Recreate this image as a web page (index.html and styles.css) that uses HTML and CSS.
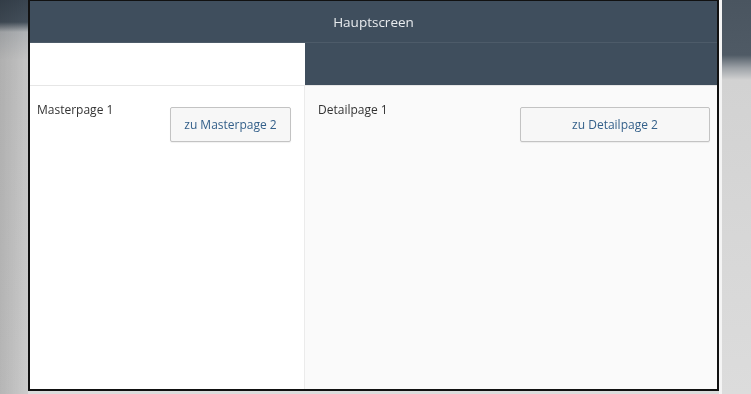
FILE: index.html
```html
<!DOCTYPE html>
<html lang="de">
<head>
<meta charset="utf-8">
<title>Hauptscreen</title>
<link rel="stylesheet" href="styles.css">
</head>
<body>
<div class="stage">
  <div class="side side-left"></div>
  <div class="frame">
    <div class="shellbar">Hauptscreen</div>
    <div class="subbars">
      <div class="subbar-master"></div>
      <div class="subbar-detail"></div>
    </div>
    <div class="panes">
      <div class="pane pane-master">
        <span class="label">Masterpage 1</span>
        <button class="btn btn-master">zu Masterpage 2</button>
      </div>
      <div class="pane pane-detail">
        <span class="label">Detailpage 1</span>
        <button class="btn btn-detail">zu Detailpage 2</button>
      </div>
    </div>
  </div>
  <div class="side side-right"></div>
</div>
</body>
</html>
```
FILE: styles.css
```css
* { box-sizing: border-box; }
html, body { margin: 0; padding: 0; }
body {
  width: 751px;
  height: 394px;
  overflow: hidden;
  background: #dcdcdc;
  font-family: "Open Sans", "Noto Sans", sans-serif;
}
.stage {
  display: flex;
  height: 394px;
}
.side { height: 394px; }
.side-left {
  width: 28px;
  background: linear-gradient(to bottom, #3b4753 0px, #46525e 22px, #b9bcbf 32px, #cfcfcf 60px, #d6d6d6 394px);
  background-color: #d4d4d4;
  position: relative;
}
.side-left::after {
  content: "";
  position: absolute;
  inset: 0;
  background: linear-gradient(to right, rgba(190,190,190,0.6), rgba(225,225,225,0.4));
  mix-blend-mode: multiply;
}
.side-right {
  flex: 1;
  border-left: 3px solid #f4f4f4;
  background: linear-gradient(to bottom, #4a5560 0px, #4f5a65 55px, #9da2a7 68px, #d2d2d2 80px, #dcdcdc 394px);
}
.frame {
  width: 691px;
  height: 391px;
  border: 2px solid #111;
  border-top-width: 1px;
  display: flex;
  flex-direction: column;
  background: #fff;
}
.shellbar {
  height: 42px;
  background: #3f4e5d;
  border-bottom: 1px solid #4d5b69;
  color: #e8ebee;
  font-size: 13.5px;
  display: flex;
  align-items: center;
  justify-content: center;
  padding-left: 0;
}
.subbars {
  display: flex;
  height: 43px;
  border-bottom: 1px solid #e6e6e6;
}
.subbar-master {
  width: 275px;
  background: #fff;
}
.subbar-detail {
  flex: 1;
  background: #3f4e5d;
}
.panes {
  flex: 1;
  display: flex;
}
.pane {
  display: flex;
  justify-content: space-between;
  align-items: flex-start;
}
.pane-master {
  width: 275px;
  background: #fff;
  border-right: 1px solid #ebebeb;
  padding: 15px 13px 0 7px;
}
.pane-detail {
  flex: 1;
  background: #fafafa;
  padding: 15px 7px 0 13px;
}
.label {
  font-size: 12px;
  color: #333;
  line-height: 18px;
}
.btn {
  margin-top: 6px;
  height: 35px;
  border: 1px solid #c3c3c3;
  border-radius: 2px;
  background: #f7f7f7;
  color: #34608a;
  font-family: "Open Sans", "Noto Sans", sans-serif;
  font-size: 12px;
  padding: 0;
  box-shadow: 0 1px 1px rgba(0,0,0,0.06);
}
.btn-master { width: 121px; }
.btn-detail { width: 190px; }
```
